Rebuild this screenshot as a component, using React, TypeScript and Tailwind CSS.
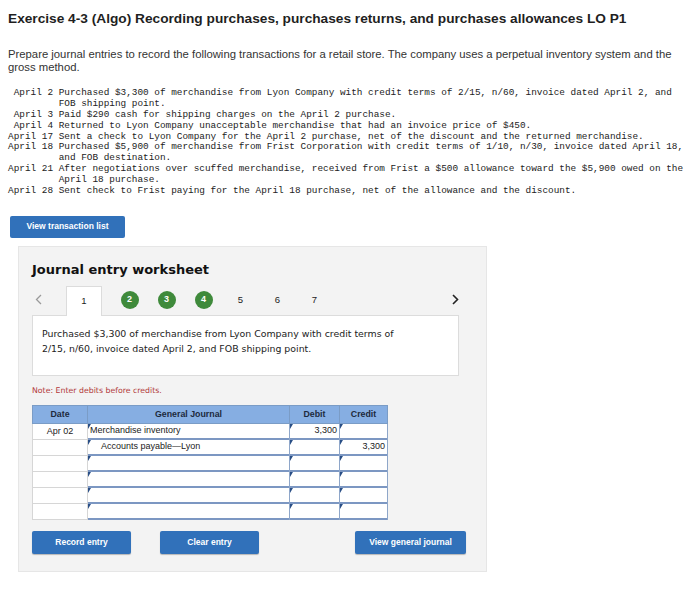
import React from 'react';

const mono = { fontFamily: '"Liberation Mono", "Courier New", monospace' };

const transactions = [
  ' April 2 Purchased $3,300 of merchandise from Lyon Company with credit terms of 2/15, n/60, invoice dated April 2, and',
  '         FOB shipping point.',
  ' April 3 Paid $290 cash for shipping charges on the April 2 purchase.',
  ' April 4 Returned to Lyon Company unacceptable merchandise that had an invoice price of $450.',
  'April 17 Sent a check to Lyon Company for the April 2 purchase, net of the discount and the returned merchandise.',
  'April 18 Purchased $5,900 of merchandise from Frist Corporation with credit terms of 1/10, n/30, invoice dated April 18,',
  '         and FOB destination.',
  'April 21 After negotiations over scuffed merchandise, received from Frist a $500 allowance toward the $5,900 owed on the',
  '         April 18 purchase.',
  'April 28 Sent check to Frist paying for the April 18 purchase, net of the allowance and the discount.',
];

const rows = [
  { date: 'Apr 02', account: 'Merchandise inventory', indent: false, debit: '3,300', credit: '' },
  { date: '', account: 'Accounts payable\u2014Lyon', indent: true, debit: '', credit: '3,300' },
  { date: '', account: '', indent: false, debit: '', credit: '' },
  { date: '', account: '', indent: false, debit: '', credit: '' },
  { date: '', account: '', indent: false, debit: '', credit: '' },
  { date: '', account: '', indent: false, debit: '', credit: '' },
];

const InputCell: React.FC<{ children?: React.ReactNode; align?: 'left' | 'right'; indent?: boolean }> = ({
  children,
  align = 'left',
  indent,
}) => (
  <td className="p-0 border-x border-[#8ea6c9] bg-white">
    <div
      className={`relative h-[16px] border-b-2 border-[#7c97c2] flex items-center text-[9px] text-[#222] leading-none ${
        align === 'right' ? 'justify-end pr-[2px]' : indent ? 'pl-[13px]' : 'pl-[2px]'
      }`}
    >
      <span className="absolute left-0 top-0 w-0 h-0 border-t-[5px] border-r-[3px] border-t-[#2a4f86] border-r-transparent" />
      {children}
    </div>
  </td>
);

const BlueButton: React.FC<{ label: string; className?: string }> = ({ label, className = '' }) => (
  <button
    className={`h-[23px] rounded-[2px] bg-[#3171ba] text-white text-[8.5px] font-bold shadow-[0_1px_1px_rgba(0,0,0,0.25)] ${className}`}
    style={{ fontFamily: '"Liberation Sans", Arial, sans-serif' }}
  >
    {label}
  </button>
);

export default function App() {
  return (
    <div className="w-[700px] min-h-[591px] bg-white px-[8px] pt-[10px]" style={{ fontFamily: '"Liberation Sans", Arial, sans-serif' }}>
      <h1 className="text-[13.7px] leading-[17px] font-bold text-[#1f1f1f]">
        Exercise 4-3 (Algo) Recording purchases, purchases returns, and purchases allowances LO P1
      </h1>

      <p className="mt-[21px] text-[11.3px] leading-[13px] text-[#333] pr-[10px]">
        Prepare journal entries to record the following transactions for a retail store. The company uses a perpetual inventory system and the gross method.
      </p>

      <pre className="mt-[14px] text-[9.38px] leading-[10.88px] text-[#222] whitespace-pre" style={mono}>
        {transactions.join('\n')}
      </pre>

      <button className="mt-[19px] ml-[2px] w-[115px] h-[22px] rounded-[2px] bg-[#3171ba] text-white text-[8.5px] font-bold">
        View transaction list
      </button>

      <div className="mt-[8px] ml-[10px] w-[469px] bg-[#f3f3f3] border border-[#e6e6e6] pl-[13px] pr-[27px] pt-[15px] pb-[17px]">
        <h2 className="text-[13px] leading-[16px] font-bold text-[#111]" style={{ fontFamily: '"DejaVu Sans", Verdana, sans-serif' }}>
          Journal entry worksheet
        </h2>

        <div className="mt-[7px] flex items-end h-[30px] relative">
          <div className="w-[34px] h-[30px] flex items-center pl-[3px]">
            <svg width="7" height="11" viewBox="0 0 7 11" fill="none">
              <path d="M6 1L1.5 5.5L6 10" stroke="#9a9a9a" strokeWidth="1.3" />
            </svg>
          </div>
          <div className="w-[36px] h-[30px] bg-white border border-b-0 border-[#dcdcdc] relative z-10 -mb-px flex items-center justify-center text-[9.5px] text-[#222]">
            1
          </div>
          <div className="w-[9px]" />
          {['2', '3', '4'].map((n) => (
            <div key={n} className="w-[37px] h-[30px] flex items-center justify-center">
              <span className="w-[18px] h-[18px] rounded-full bg-[#3f8a3b] text-white text-[9px] font-bold flex items-center justify-center">
                {n}
              </span>
            </div>
          ))}
          {['5', '6', '7'].map((n) => (
            <div key={n} className="w-[37px] h-[30px] flex items-center justify-center text-[9.5px] text-[#222]">
              {n}
            </div>
          ))}
          <div className="flex-1" />
          <div className="h-[30px] flex items-center">
            <svg width="7" height="11" viewBox="0 0 7 11" fill="none">
              <path d="M1 1L5.5 5.5L1 10" stroke="#222" strokeWidth="1.6" />
            </svg>
          </div>
        </div>

        <div
          className="h-[61px] bg-white border border-[#dcdcdc] pl-[9px] pt-[10px] text-[9.4px] leading-[15px] text-[#222]"
          style={{ fontFamily: '"DejaVu Sans", Verdana, sans-serif' }}
        >
          Purchased $3,300 of merchandise from Lyon Company with credit terms of
          <br />
          2/15, n/60, invoice dated April 2, and FOB shipping point.
        </div>

        <p className="mt-[10px] text-[7.8px] leading-[10px] text-[#b23a3a]" style={{ fontFamily: '"DejaVu Sans", Verdana, sans-serif' }}>
          Note: Enter debits before credits.
        </p>

        <table className="mt-[9px] w-[355px] border-collapse table-fixed">
          <colgroup>
            <col className="w-[55px]" />
            <col className="w-[202px]" />
            <col className="w-[50px]" />
            <col className="w-[48px]" />
          </colgroup>
          <thead>
            <tr className="h-[18px] bg-[#86aee2] text-[8.8px] font-bold text-[#1d2a3d]">
              <th className="border border-[#7a9cc6] font-bold">Date</th>
              <th className="border border-[#7a9cc6] font-bold">General Journal</th>
              <th className="border border-[#7a9cc6] font-bold">Debit</th>
              <th className="border border-[#7a9cc6] font-bold">Credit</th>
            </tr>
          </thead>
          <tbody>
            {rows.map((r, i) => (
              <tr key={i}>
                <td className="p-0 h-[16px] border border-[#d6d6d6] bg-white text-center text-[9px] text-[#222]">{r.date}</td>
                <InputCell indent={r.indent}>{r.account}</InputCell>
                <InputCell align="right">{r.debit}</InputCell>
                <InputCell align="right">{r.credit}</InputCell>
              </tr>
            ))}
          </tbody>
        </table>

        <div className="mt-[11px] flex items-center">
          <BlueButton label="Record entry" className="w-[99px]" />
          <BlueButton label="Clear entry" className="ml-[29px] w-[99px]" />
          <div className="flex-1" />
          <BlueButton label="View general journal" className="w-[111px] -mr-[7px]" />
        </div>
      </div>
    </div>
  );
}
